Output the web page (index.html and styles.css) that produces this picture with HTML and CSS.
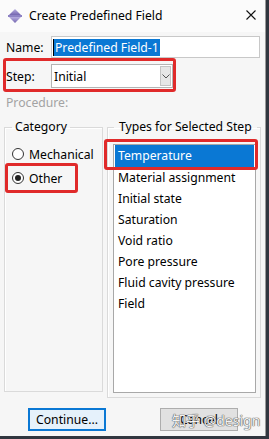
FILE: index.html
```html
<!DOCTYPE html>
<html>
<head>
<meta charset="utf-8">
<link rel="stylesheet" href="styles.css">
</head>
<body>
<div class="window">
  <div class="titlebar">
    <svg class="app-icon" width="16" height="16" viewBox="0 0 16 16">
      <defs>
        <linearGradient id="g" x1="0" y1="0" x2="0" y2="1">
          <stop offset="0" stop-color="#b7aee0"/>
          <stop offset="1" stop-color="#7466b0"/>
        </linearGradient>
      </defs>
      <polygon points="8,1 14,7 2,7" fill="url(#g)"/>
      <rect x="1" y="7" width="14" height="2" fill="#8d82c4"/>
      <polygon points="2,9 14,9 8,15" fill="url(#g)"/>
    </svg>
    <span class="title">Create Predefined Field</span>
    <svg class="close" width="10" height="10" viewBox="0 0 10 10">
      <path d="M0.5 0.5 L9.5 9.5 M9.5 0.5 L0.5 9.5" stroke="#111" stroke-width="1.1"/>
    </svg>
  </div>

  <div class="content">
    <div class="row name-row">
      <span class="label">Name:</span>
      <div class="textbox"><span class="caret"></span><span class="sel">Predefined Field-1</span></div>
    </div>
    <div class="row step-row">
      <span class="label">Step:</span>
      <div class="combo">
        <span class="combo-text">Initial</span>
        <span class="combo-btn">
          <svg width="8" height="5" viewBox="0 0 8 5"><path d="M0.5 0.5 L4 4 L7.5 0.5" fill="none" stroke="#555" stroke-width="1"/></svg>
        </span>
      </div>
    </div>
    <div class="procedure">Procedure:</div>

    <div class="groups">
      <fieldset class="group cat">
        <legend>Category</legend>
        <label class="radio"><span class="dot"></span>Mechanical</label>
        <label class="radio"><span class="dot on"></span>Other</label>
      </fieldset>
      <fieldset class="group types">
        <legend>Types for Selected Step</legend>
        <ul class="list">
          <li class="selected">Temperature</li>
          <li>Material assignment</li>
          <li>Initial state</li>
          <li>Saturation</li>
          <li>Void ratio</li>
          <li>Pore pressure</li>
          <li>Fluid cavity pressure</li>
          <li>Field</li>
        </ul>
      </fieldset>
    </div>

    <div class="buttons">
      <button class="btn default">Continue...</button>
      <button class="btn">Cancel</button>
    </div>
  </div>

  <div class="mark mark-step"></div>
  <div class="mark mark-other"></div>
  <div class="mark mark-temp"></div>
  <div class="watermark">知乎 @design</div>
</div>
</body>
</html>
```

FILE: styles.css
```css
html {
  background: #31363f;
}
body {
  margin: 0;
  font-family: "Noto Sans", "Open Sans", "Noto Sans CJK SC", sans-serif;
  font-size: 12.2px;
  color: #000;
}
.window {
  position: relative;
  width: 265px;
  height: 436px;
  background: #f6f6f6;
  border-right: 1px solid #9a9a9a;
  overflow: hidden;
}
.titlebar {
  height: 32px;
  display: flex;
  align-items: center;
  padding-left: 7px;
  padding-right: 9px;
  background: #fbfbfb;
}
.app-icon {
  flex: none;
}
.title {
  margin-left: 6px;
  font-size: 12.2px;
  flex: 1;
  margin-top: -1px;
}
.close {
  flex: none;
  margin-top: -2px;
}
.content {
  padding: 0 4px 0 4px;
}
.row {
  display: flex;
  align-items: center;
}
.label {
  width: 45px;
  padding-left: 2px;
  flex: none;
}
.name-row {
  margin-top: 4px;
}
.textbox {
  flex: 1;
  height: 22px;
  box-sizing: border-box;
  border: 1px solid #c8c8c8;
  background: #fff;
  display: flex;
  align-items: center;
  padding-left: 1px;
  margin-right: 1px;
}
.caret {
  width: 1px;
  height: 17px;
  background: #000;
}
.sel {
  background: #0a78d4;
  color: #fff;
  line-height: 17px;
  padding: 0 1px;
}
.step-row {
  margin-top: 6px;
}
.combo {
  width: 122px;
  height: 24px;
  box-sizing: border-box;
  border: 1px solid #b4b4b4;
  background: #fff;
  display: flex;
  align-items: center;
  padding-left: 2px;
}
.combo-text {
  flex: 1;
}
.combo-btn {
  width: 11px;
  height: 20px;
  box-sizing: border-box;
  border: 1px solid #c4c4c4;
  background: #e6e6e6;
  display: flex;
  align-items: center;
  justify-content: center;
  margin-right: 1px;
}
.procedure {
  margin-top: 7px;
  padding-left: 2px;
  color: #a3a3a3;
  line-height: 16px;
}
.groups {
  margin-top: 8px;
  display: flex;
  gap: 4px;
}
.group {
  margin: 0;
  border: 1px solid #dadada;
  box-shadow: inset 1px 1px 0 #fff;
  height: 264px;
  min-width: 0;
}
.group legend {
  line-height: 16px;
  white-space: nowrap;
}
.cat {
  width: 83px;
  flex: none;
  padding: 7px 7px 0 7px;
}
.cat legend {
  margin-left: 0px;
  padding: 0 3px;
}
.types {
  flex: 1;
  padding: 9px 4px 4px 5px;
}
.types legend {
  margin-left: 1px;
  padding: 0 5px;
}
.radio {
  display: flex;
  align-items: center;
  height: 24px;
  gap: 5px;
}
.dot {
  width: 12px;
  height: 12px;
  box-sizing: border-box;
  border: 1px solid #333;
  border-radius: 50%;
  background: #fff;
  display: flex;
  align-items: center;
  justify-content: center;
}
.dot.on::after {
  content: "";
  width: 6px;
  height: 6px;
  border-radius: 50%;
  background: #222;
}
.list {
  list-style: none;
  margin: 0;
  padding: 0 1px;
  height: 249px;
  box-sizing: border-box;
  border: 1px solid #a8a8a8;
  background: #fff;
}
.list li {
  height: 21px;
  line-height: 21px;
  padding-left: 3px;
}
.list li.selected {
  background: #0a78d4;
  color: #fff;
  height: 22px;
  line-height: 22px;
}
.buttons {
  display: flex;
  gap: 54px;
  padding-left: 24px;
  margin-top: 10px;
}
.btn {
  font-family: inherit;
  font-size: 12.2px;
  height: 23px;
  width: 78px;
  box-sizing: border-box;
  border: 1px solid #adadad;
  background: #e1e1e1;
  color: #000;
  padding: 0;
}
.btn.default {
  border: 2px solid #0a78d4;
  background: #e5f1fb;
}
.mark {
  position: absolute;
  box-sizing: border-box;
  border: 3px solid #e02a2a;
  border-radius: 3px;
}
.mark-step {
  left: 3px;
  top: 58px;
  width: 173px;
  height: 34px;
}
.mark-other {
  left: 5px;
  top: 163px;
  width: 73px;
  height: 30px;
}
.mark-temp {
  left: 104px;
  top: 139px;
  width: 154px;
  height: 31px;
}
.watermark {
  position: absolute;
  left: 172px;
  top: 412px;
  font-size: 14px;
  line-height: 18px;
  color: #f2f2f2;
  text-shadow: 0 0 1px #5a5a5a, 0 0 1px #5a5a5a, 0 0 1px #5a5a5a;
}
```
